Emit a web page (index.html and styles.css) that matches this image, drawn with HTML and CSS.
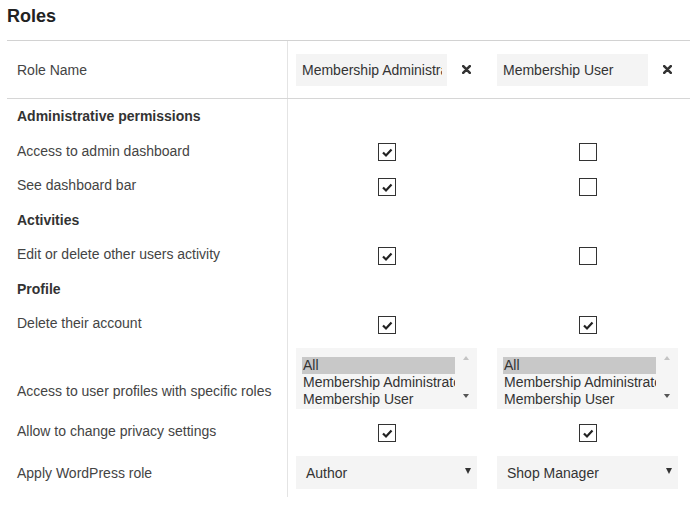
FILE: index.html
```html
<!DOCTYPE html>
<html lang="en">
<head>
  <meta charset="UTF-8">
  <meta name="viewport" content="width=device-width, initial-scale=1.0">
  <title>Roles</title>
  <link rel="stylesheet" href="styles.css">
</head>
<body>
  <h1 class="title">Roles</h1>

  <div class="roles">
    <div class="row row-head">
      <div class="label">Role Name</div>
      <div class="cell">
        <input type="text" class="name-input" value="Membership Administrator">
        <span class="remove"><svg width="9" height="9" viewBox="0 0 9 9"><path d="M1.2 1.2L7.8 7.8M7.8 1.2L1.2 7.8" stroke="#333" stroke-width="2.6" stroke-linecap="round"/></svg></span>
      </div>
      <div class="cell">
        <input type="text" class="name-input" value="Membership User">
        <span class="remove"><svg width="9" height="9" viewBox="0 0 9 9"><path d="M1.2 1.2L7.8 7.8M7.8 1.2L1.2 7.8" stroke="#333" stroke-width="2.6" stroke-linecap="round"/></svg></span>
      </div>
    </div>

    <div class="row">
      <div class="label section">Administrative permissions</div>
      <div class="cell"></div>
      <div class="cell"></div>
    </div>
    <div class="row">
      <div class="label">Access to admin dashboard</div>
      <div class="cell center"><span class="check on"></span></div>
      <div class="cell center"><span class="check"></span></div>
    </div>
    <div class="row">
      <div class="label">See dashboard bar</div>
      <div class="cell center"><span class="check on"></span></div>
      <div class="cell center"><span class="check"></span></div>
    </div>

    <div class="row">
      <div class="label section">Activities</div>
      <div class="cell"></div>
      <div class="cell"></div>
    </div>
    <div class="row">
      <div class="label">Edit or delete other users activity</div>
      <div class="cell center"><span class="check on"></span></div>
      <div class="cell center"><span class="check"></span></div>
    </div>

    <div class="row">
      <div class="label section">Profile</div>
      <div class="cell"></div>
      <div class="cell"></div>
    </div>
    <div class="row">
      <div class="label">Delete their account</div>
      <div class="cell center"><span class="check on"></span></div>
      <div class="cell center"><span class="check on"></span></div>
    </div>
    <div class="row row-list">
      <div class="label">Access to user profiles with specific roles</div>
      <div class="cell">
        <div class="listbox">
          <div class="options">
            <div class="option selected">All</div>
            <div class="option">Membership Administrator</div>
            <div class="option">Membership User</div>
          </div>
          <div class="scroll"><span class="up"></span><span class="down"></span></div>
        </div>
      </div>
      <div class="cell">
        <div class="listbox">
          <div class="options">
            <div class="option selected">All</div>
            <div class="option">Membership Administrator</div>
            <div class="option">Membership User</div>
          </div>
          <div class="scroll"><span class="up"></span><span class="down"></span></div>
        </div>
      </div>
    </div>
    <div class="row">
      <div class="label">Allow to change privacy settings</div>
      <div class="cell center"><span class="check on"></span></div>
      <div class="cell center"><span class="check on"></span></div>
    </div>
    <div class="row row-select">
      <div class="label">Apply WordPress role</div>
      <div class="cell"><div class="dropdown">Author<span class="caret"></span></div></div>
      <div class="cell"><div class="dropdown">Shop Manager<span class="caret"></span></div></div>
    </div>
  </div>
</body>
</html>
```

FILE: styles.css
```css
body {
  margin: 0;
  background: #fff;
  font-family: "Liberation Sans", Arial, sans-serif;
  font-size: 14px;
  line-height: 20px;
  color: #444;
}
.title {
  font-size: 18px;
  line-height: 22px;
  font-weight: 700;
  color: #222;
  margin: 5px 0 13px 7px;
}
.roles {
  margin-left: 7px;
  border-top: 1px solid #d2d2d2;
}
.row {
  display: grid;
  grid-template-columns: 281px 201px 201px;
  height: 34.5px;
}
.row-head {
  height: 57px;
  border-bottom: 1px solid #d6d6d6;
}
.row-list {
  height: 73.5px;
}
.row-select {
  height: 48.5px;
}
.label {
  box-sizing: border-box;
  border-right: 1px solid #e4e4e4;
  padding-left: 10px;
  display: flex;
  align-items: center;
  white-space: nowrap;
}
.label.section {
  font-weight: 700;
  color: #333;
}
.row-list .label {
  align-items: flex-end;
  padding-bottom: 13px;
}
.cell {
  padding: 0 12px 0 8px;
  display: flex;
  align-items: center;
}
.cell.center {
  justify-content: center;
}
.row-list .cell {
  align-items: flex-start;
  padding-top: 7.5px;
}
.name-input {
  box-sizing: border-box;
  width: 151px;
  height: 32px;
  border: none;
  background: #f4f4f4;
  padding: 0 5px 0 6px;
  font-family: inherit;
  font-size: 14px;
  color: #333;
  outline: none;
}
.remove {
  display: flex;
  margin-left: 15px;
}
.check {
  box-sizing: border-box;
  width: 18px;
  height: 18px;
  margin-top: 3px;
  border: 1px solid #333;
  background: #fff;
}
.check.on {
  background: #fff url("data:image/svg+xml;utf8,<svg xmlns='http://www.w3.org/2000/svg' width='16' height='16' viewBox='0 0 16 16'><path d='M4 8.5L7 11.5L12.5 5.5' fill='none' stroke='%23222' stroke-width='2.2'/></svg>") no-repeat center;
}
.listbox {
  display: flex;
  width: 181px;
  height: 61px;
  background: #f5f5f5;
}
.options {
  flex: 1;
  min-width: 0;
  padding: 9px 0 0 6px;
  overflow: hidden;
  color: #333;
}
.option {
  line-height: 17px;
  padding-left: 1px;
  white-space: nowrap;
  overflow: hidden;
}
.option.selected {
  background: #c8c8c8;
}
.scroll {
  width: 22px;
  display: flex;
  flex-direction: column;
  align-items: center;
  justify-content: space-between;
  padding: 8px 0 11px;
}
.scroll .up {
  width: 0;
  height: 0;
  border-left: 3px solid transparent;
  border-right: 3px solid transparent;
  border-bottom: 4px solid #c4c4c4;
}
.scroll .down {
  width: 0;
  height: 0;
  border-left: 3px solid transparent;
  border-right: 3px solid transparent;
  border-top: 4px solid #555;
}
.dropdown {
  box-sizing: border-box;
  width: 181px;
  height: 33px;
  background: #f4f4f4;
  padding: 0 6px 0 10px;
  display: flex;
  align-items: center;
  justify-content: space-between;
  color: #333;
}
.caret {
  width: 0;
  height: 0;
  border-left: 3px solid transparent;
  border-right: 3px solid transparent;
  border-top: 6px solid #333;
  margin-top: -4px;
}
```
